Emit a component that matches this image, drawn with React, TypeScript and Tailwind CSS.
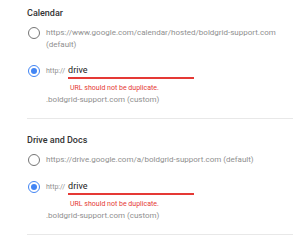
import React from "react";

const Radio: React.FC<{ checked?: boolean }> = ({ checked }) => (
  <span
    className={`flex h-[12px] w-[12px] shrink-0 items-center justify-center rounded-full border-[1.5px] ${
      checked ? "border-[#4285f4]" : "border-[#757575]"
    }`}
  >
    {checked && <span className="h-[6px] w-[6px] rounded-full bg-[#4285f4]" />}
  </span>
);

const Section: React.FC<{ title: string; url: string; wrap?: boolean; top: string }> = ({
  title,
  url,
  wrap,
  top,
}) => (
  <div className={`ml-[27px] mr-[7px] border-b border-[#e8e8e8] pb-[12px] ${top}`}>
    <h3 className="text-[9px] font-medium leading-[12px] text-[#333]">{title}</h3>

    <div className="mt-[8px] flex items-start">
      <div className="ml-[1px]">
        <Radio />
      </div>
      <div className="ml-[6px] whitespace-nowrap text-[8px] leading-[11.5px] text-[#8f8f8f]">
        {wrap ? (
          <>
            <div>{url}</div>
            <div>(default)</div>
          </>
        ) : (
          <div>{url} (default)</div>
        )}
      </div>
    </div>

    <div className="mt-[14px] flex items-start">
      <div className="ml-[1px] mt-[1px]">
        <Radio checked />
      </div>
      <div className="ml-[6px]">
        <div className="flex items-end">
          <span className="pb-[3px] text-[7px] leading-[10px] text-[#8f8f8f]">http://</span>
          <div className="ml-[3px] w-[126px] border-b-2 border-[#e53935] pb-[1px] text-[9px] leading-[12px] text-[#212121]">
            drive
          </div>
        </div>
        <div className="ml-[24px] mt-[4px] text-[7px] leading-[10px] text-[#e53935]">
          URL should not be duplicate.
        </div>
        <div className="mt-[1px] text-[8px] leading-[12px] text-[#8f8f8f]">
          .boldgrid-support.com (custom)
        </div>
      </div>
    </div>
  </div>
);

export default function App() {
  return (
    <div
      className="h-[241px] w-[300px] overflow-hidden bg-white"
      style={{ fontFamily: "Roboto, 'Liberation Sans', sans-serif" }}
    >
      <Section
        title="Calendar"
        url="https://www.google.com/calendar/hosted/boldgrid-support.com"
        wrap
        top="pt-[7px]"
      />
      <Section
        title="Drive and Docs"
        url="https://drive.google.com/a/boldgrid-support.com"
        top="pt-[15px]"
      />
    </div>
  );
}
